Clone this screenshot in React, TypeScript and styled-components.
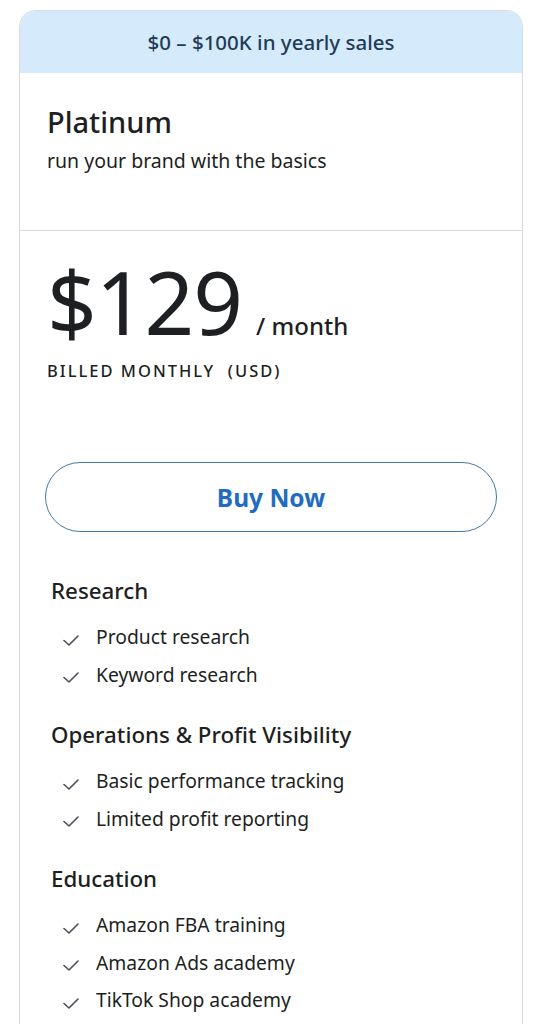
import styled, { createGlobalStyle } from "styled-components";

const GlobalStyle = createGlobalStyle`
  html, body {
    margin: 0;
    padding: 0;
    background: #ffffff;
  }
  body {
    font-family: "Noto Sans", "Open Sans", sans-serif;
    color: #1d1f22;
  }
`;

const Page = styled.div`
  width: 542px;
  height: 1024px;
  overflow: hidden;
  padding: 10px 19px 0;
  box-sizing: border-box;
`;

const Card = styled.div`
  border: 1px solid #d8dce0;
  border-bottom: none;
  border-radius: 17px 17px 0 0;
  overflow: hidden;
  min-height: 1040px;
`;

const Banner = styled.div`
  height: 62px;
  background: #d5ebfb;
  display: flex;
  align-items: center;
  justify-content: center;
  font-size: 20.5px;
  color: #1e3b58;
  font-weight: 500;
`;

const Intro = styled.div`
  padding: 29px 27px 0;
  height: 158px;
  box-sizing: border-box;
  border-bottom: 1px solid #d8dce0;
`;

const PlanName = styled.h2`
  margin: 0;
  font-size: 29px;
  font-weight: 500;
  line-height: 40px;
`;

const Tagline = styled.p`
  margin: 6px 0 0;
  font-size: 19.5px;
  line-height: 26px;
`;

const PriceBlock = styled.div`
  padding: 20px 27px 0;
`;

const PriceRow = styled.div`
  display: flex;
  align-items: baseline;
  gap: 14px;
`;

const Amount = styled.span`
  font-size: 87px;
  line-height: 100px;
  font-weight: 400;
  letter-spacing: -1px;
`;

const Per = styled.span`
  font-size: 24px;
  font-weight: 500;
`;

const Billing = styled.div`
  margin-top: 10px;
  font-size: 16.5px;
  line-height: 20px;
  letter-spacing: 2px;
  font-weight: 500;
  white-space: pre;
`;

const BuyButton = styled.button`
  display: flex;
  align-items: center;
  justify-content: center;
  margin: 81px 0 0 -2px;
  width: 452px;
  height: 70px;
  border: 1.5px solid #3f7aa8;
  border-radius: 35px;
  background: #ffffff;
  color: #1f6cc0;
  font-family: inherit;
  font-size: 24.5px;
  font-weight: 700;
  cursor: pointer;
`;

const Features = styled.div`
  padding: 44px 31px 0;
`;

const Group = styled.div`
  margin-bottom: 27px;
`;

const GroupTitle = styled.h3`
  margin: 0 0 12px;
  font-size: 22.3px;
  font-weight: 500;
  line-height: 30px;
`;

const Item = styled.div`
  display: flex;
  align-items: center;
  height: 37.5px;
  padding-left: 11px;
  font-size: 19.3px;
`;

const Check = styled.svg`
  width: 18px;
  height: 18px;
  margin-right: 16px;
  margin-top: 6px;
  flex-shrink: 0;
`;

const groups = [
  { title: "Research", items: ["Product research", "Keyword research"] },
  {
    title: "Operations & Profit Visibility",
    items: ["Basic performance tracking", "Limited profit reporting"],
  },
  {
    title: "Education",
    items: ["Amazon FBA training", "Amazon Ads academy", "TikTok Shop academy"],
  },
];

export default function App() {
  return (
    <>
      <GlobalStyle />
      <Page>
        <Card>
          <Banner>$0 – $100K in yearly sales</Banner>
          <Intro>
            <PlanName>Platinum</PlanName>
            <Tagline>run your brand with the basics</Tagline>
          </Intro>
          <PriceBlock>
            <PriceRow>
              <Amount>$129</Amount>
              <Per>/ month</Per>
            </PriceRow>
            <Billing>{"BILLED MONTHLY  (USD)"}</Billing>
            <BuyButton>Buy Now</BuyButton>
          </PriceBlock>
          <Features>
            {groups.map((g) => (
              <Group key={g.title}>
                <GroupTitle>{g.title}</GroupTitle>
                {g.items.map((it) => (
                  <Item key={it}>
                    <Check viewBox="0 0 18 18" fill="none">
                      <path
                        d="M2 9.5 L7 14 L16 5"
                        stroke="#4a5058"
                        strokeWidth="1.6"
                        strokeLinecap="round"
                        strokeLinejoin="round"
                      />
                    </Check>
                    {it}
                  </Item>
                ))}
              </Group>
            ))}
          </Features>
        </Card>
      </Page>
    </>
  );
}
